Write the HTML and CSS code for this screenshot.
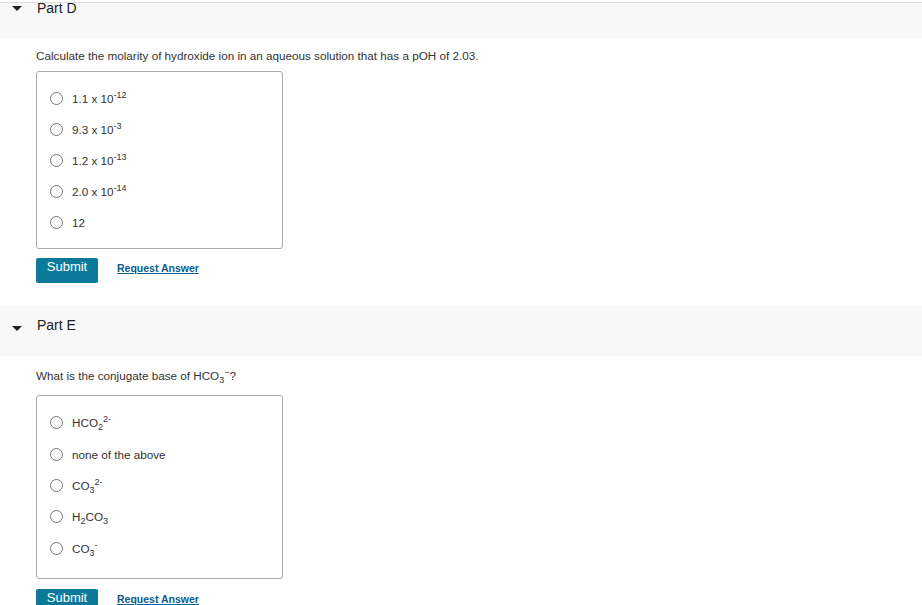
FILE: index.html
```html
<!DOCTYPE html>
<html>
<head>
<meta charset="utf-8">
<link rel="stylesheet" href="styles.css">
</head>
<body>
<section class="part">
  <div class="part-head head-d">
    <span class="caret"></span>
    <h2 class="part-title">Part D</h2>
  </div>
  <div class="part-body body-d">
    <p class="question">Calculate the molarity of hydroxide ion in an aqueous solution that has a pOH of 2.03.</p>
    <ul class="choices choices-d">
      <li class="choice"><span class="radio"></span><span class="label">1.1 x 10<sup>-12</sup></span></li>
      <li class="choice"><span class="radio"></span><span class="label">9.3 x 10<sup>-3</sup></span></li>
      <li class="choice"><span class="radio"></span><span class="label">1.2 x 10<sup>-13</sup></span></li>
      <li class="choice"><span class="radio"></span><span class="label">2.0 x 10<sup>-14</sup></span></li>
      <li class="choice"><span class="radio"></span><span class="label">12</span></li>
    </ul>
    <div class="actions">
      <button class="submit">Submit</button>
      <a class="request" href="#">Request Answer</a>
    </div>
  </div>
</section>
<section class="part">
  <div class="part-head head-e">
    <span class="caret"></span>
    <h2 class="part-title">Part E</h2>
  </div>
  <div class="part-body body-e">
    <p class="question">What is the conjugate base of HCO<sub>3</sub><sup>&#8722;</sup>?</p>
    <ul class="choices choices-e">
      <li class="choice"><span class="radio"></span><span class="label">HCO<sub>2</sub><sup>2-</sup></span></li>
      <li class="choice"><span class="radio"></span><span class="label">none of the above</span></li>
      <li class="choice"><span class="radio"></span><span class="label">CO<sub>3</sub><sup>2-</sup></span></li>
      <li class="choice"><span class="radio"></span><span class="label">H<sub>2</sub>CO<sub>3</sub></span></li>
      <li class="choice"><span class="radio"></span><span class="label">CO<sub>3</sub><sup>-</sup></span></li>
    </ul>
    <div class="actions actions-e">
      <button class="submit">Submit</button>
      <a class="request" href="#">Request Answer</a>
    </div>
  </div>
</section>
</body>
</html>
```
FILE: styles.css
```css
html, body {
  margin: 0;
  padding: 0;
  background: #fff;
}
body {
  font-family: "Liberation Sans", Arial, sans-serif;
  color: #333;
  width: 922px;
  height: 605px;
  overflow: hidden;
}
.part-head {
  display: flex;
  align-items: flex-start;
  background: #f8f8f8;
}
.head-d {
  height: 38px;
  background: linear-gradient(#fff 0 2px, #dcdcdc 2px 3px, #f8f8f8 3px);
}
.head-e {
  height: 50px;
  margin-top: 23px;
  align-items: center;
}
.caret {
  width: 0;
  height: 0;
  margin-left: 12px;
  margin-right: 15px;
  border-left: 5px solid transparent;
  border-right: 5px solid transparent;
  border-top: 5px solid #222;
}
.head-d .caret {
  margin-top: 6px;
}
.head-e .caret {
  margin-top: -6px;
}
.part-title {
  margin: 0;
  font-size: 14px;
  font-weight: normal;
  line-height: 16px;
  color: #222;
}
.head-e .part-title {
  margin-top: -13px;
}
.part-body {
  padding-left: 36px;
}
.question {
  margin: 0;
  font-size: 11.7px;
  line-height: 16px;
}
.body-d .question {
  margin-top: 10px;
}
.body-e .question {
  margin-top: 12px;
}
sup, sub {
  font-size: 9px;
  line-height: 0;
  position: relative;
  vertical-align: baseline;
}
sup {
  top: -5px;
}
sub {
  top: 3px;
}
.choices {
  list-style: none;
  margin: 0;
  width: 232px;
  border: 1px solid #aaa;
  border-radius: 3px;
  padding: 11px 0 10px 13px;
  box-sizing: content-box;
}
.choices-d {
  margin-top: 7px;
}
.choices-e {
  margin-top: 11px;
  padding-bottom: 14px;
}
.choice {
  display: flex;
  align-items: center;
  height: 31px;
  font-size: 11.7px;
}
.choices-e .choice {
  height: 31.4px;
}
.radio {
  width: 11px;
  height: 11px;
  border: 1px solid #777;
  border-radius: 50%;
  margin-right: 9px;
  flex: none;
  background: #fff;
}
.actions {
  display: flex;
  align-items: center;
  height: 25px;
  margin-top: 9px;
}
.actions-e {
  margin-top: 10px;
}
.submit {
  width: 62px;
  height: 25px;
  border: none;
  border-radius: 2px;
  background: #0b7a9a;
  color: #fff;
  font-family: "Liberation Sans", Arial, sans-serif;
  font-size: 13px;
  line-height: 18px;
  padding: 0 0 7px;
  margin-right: 19px;
}
.request {
  color: #0b5c8c;
  font-size: 10.5px;
  font-weight: bold;
  text-decoration: underline;
  margin-top: -5px;
}
```
